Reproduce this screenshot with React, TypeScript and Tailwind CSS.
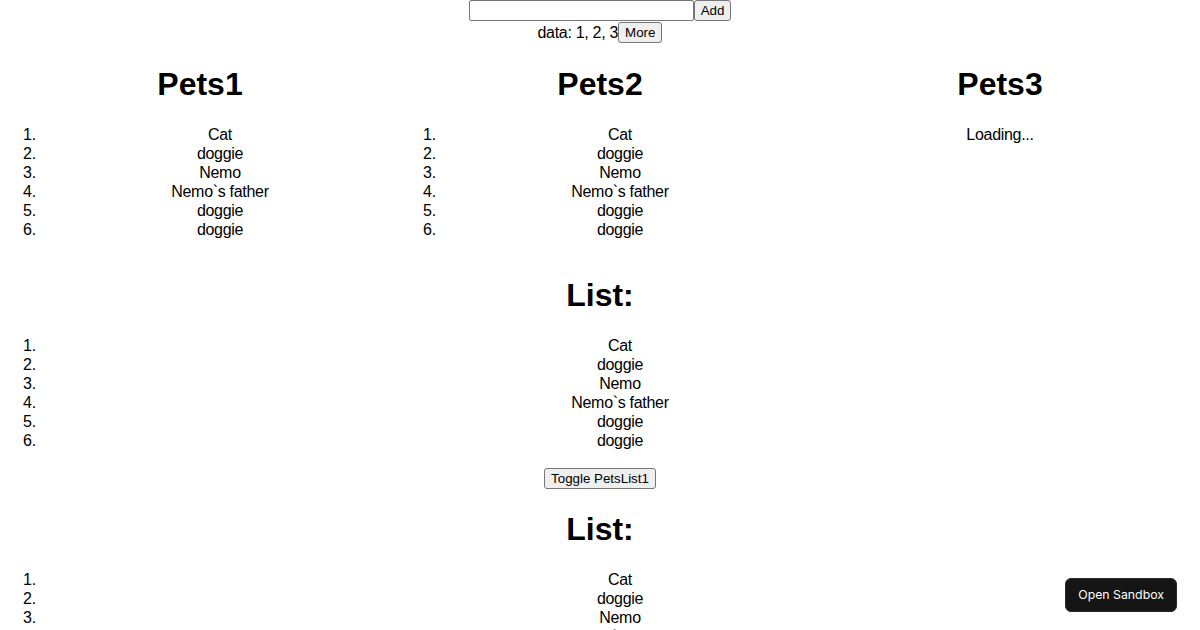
import { useState } from 'react';

const pets = ['Cat', 'doggie', 'Nemo', 'Nemo`s father', 'doggie', 'doggie'];

const btn =
  "inline-block bg-[#efefef] border border-[#767676] rounded-[3px] px-[6px] py-[1px] text-[13.33px] leading-[17px] h-[21px] text-black font-['Liberation_Sans',Arial,sans-serif]";

function PetList() {
  return (
    <ol className="list-decimal list-outside pl-10 mt-0 mb-4 leading-[19px] tracking-[-0.3px]">
      {pets.map((p, i) => (
        <li key={i}>{p}</li>
      ))}
    </ol>
  );
}

function Heading({ children }: { children: React.ReactNode }) {
  return <h1 className="text-[32px] font-bold leading-[37px] my-[21.44px]">{children}</h1>;
}

export default function App() {
  const [text, setText] = useState('');
  const [showList, setShowList] = useState(true);

  return (
    <div className="min-h-screen bg-white text-black text-center text-base font-['Liberation_Sans',Arial,Helvetica,sans-serif]">
      {/* add form */}
      <div className="flex justify-center">
        <input
          value={text}
          onChange={(e) => setText(e.target.value)}
          className="w-[225px] h-[21px] border border-[#767676] rounded-[2px] px-[2px] text-[13.33px]"
        />
        <button className={btn}>Add</button>
      </div>
      <div className="h-[23px] leading-[21px] mt-[1px] tracking-[-0.3px]">
        data: 1, 2, 3<button className={btn + ' align-bottom tracking-normal'}>More</button>
      </div>

      {/* three columns */}
      <div className="grid grid-cols-3 pb-[1px]">
        <div className="flow-root">
          <Heading>Pets1</Heading>
          <PetList />
        </div>
        <div className="flow-root">
          <Heading>Pets2</Heading>
          <PetList />
        </div>
        <div className="flow-root">
          <Heading>Pets3</Heading>
          <div className="leading-[19px] tracking-[-0.3px]">Loading...</div>
        </div>
      </div>

      <div className="flow-root">
        <Heading>List:</Heading>
        {showList && <PetList />}
      </div>
      <button className={btn + ' block mx-auto -mt-px'} onClick={() => setShowList(!showList)}>
        Toggle PetsList1
      </button>
      <div className="flow-root">
        <Heading>List:</Heading>
        <PetList />
      </div>

      <button className="fixed right-[23px] bottom-[18px] h-[34px] px-[12px] rounded-[6px] bg-[#151515] border border-[#2a2a2a] text-white text-[12.3px] font-['Inter',sans-serif]">
        Open Sandbox
      </button>
    </div>
  );
}
